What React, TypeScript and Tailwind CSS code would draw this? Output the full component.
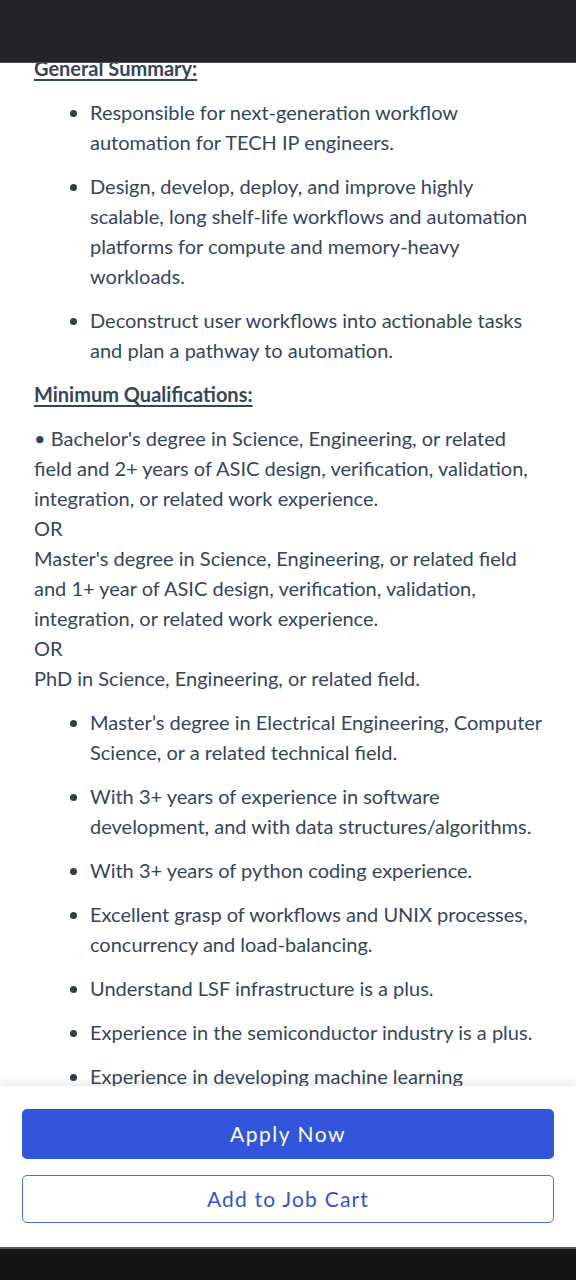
import React from 'react';

const summary: React.ReactNode[] = [
  <>Responsible for next-generation workflow<br />automation for TECH IP engineers.</>,
  <>Design, develop, deploy, and improve highly<br />scalable, long shelf-life workflows and automation<br />platforms for compute and memory-heavy<br />workloads.</>,
  <>Deconstruct user workflows into actionable tasks<br />and plan a pathway to automation.</>,
];

const quals: React.ReactNode[] = [
  <>Master’s degree in Electrical Engineering, Computer<br />Science, or a related technical field.</>,
  <>With 3+ years of experience in software<br />development, and with data structures/algorithms.</>,
  <>With 3+ years of python coding experience.</>,
  <>Excellent grasp of workflows and UNIX processes,<br />concurrency and load-balancing.</>,
  <>Understand LSF infrastructure is a plus.</>,
  <>Experience in the semiconductor industry is a plus.</>,
  <>Experience in developing machine learning<br />applications is a plus.</>,
];

const BulletList = ({ items }: { items: React.ReactNode[] }) => (
  <ul className="list-disc pl-[56px] flex flex-col gap-[14px] marker:text-[#2f3d4f]">
    {items.map((it, i) => (
      <li key={i} className="whitespace-nowrap">{it}</li>
    ))}
  </ul>
);

const App: React.FC = () => {
  return (
    <div
      className="h-screen w-full flex flex-col bg-white text-[#36465a] text-[20px] leading-[30px]"
      style={{ fontFamily: 'Lato, "Open Sans", sans-serif' }}
    >
      <header className="h-[63px] shrink-0 bg-[#232428] border-b border-[#4a4b4f] z-10" />

      <main className="flex-1 overflow-hidden px-[34px]">
        <div className="-mt-[10px] flex flex-col gap-[14px]">
          <h2 className="font-bold underline underline-offset-[3px] decoration-[1.5px] text-[#36465a]">General Summary:</h2>
          <BulletList items={summary} />
          <h2 className="font-bold underline underline-offset-[3px] decoration-[1.5px] text-[#36465a]">Minimum Qualifications:</h2>
          <p className="whitespace-nowrap">
            • Bachelor's degree in Science, Engineering, or related<br />
            field and 2+ years of ASIC design, verification, validation,<br />
            integration, or related work experience.<br />
            OR<br />
            Master's degree in Science, Engineering, or related field<br />
            and 1+ year of ASIC design, verification, validation,<br />
            integration, or related work experience.<br />
            OR<br />
            PhD in Science, Engineering, or related field.
          </p>
          <BulletList items={quals} />
        </div>
      </main>

      <footer className="shrink-0 bg-white shadow-[0_-4px_8px_rgba(0,0,0,0.08)] z-10 px-[22px] pt-[23px] pb-[24px] flex flex-col gap-[16px]">
        <button className="h-[50px] w-full rounded-[5px] bg-[#3355dc] text-white text-[21px] tracking-[1.5px]">
          Apply Now
        </button>
        <button className="h-[48px] w-full rounded-[5px] border border-[#4d6fe6] bg-white text-[#3152d8] text-[21px] tracking-[1.2px]">
          Add to Job Cart
        </button>
      </footer>

      <div className="h-[33px] shrink-0 bg-[#141515] border-t-2 border-[#5a5b5c]" />
    </div>
  );
};

export default App;
